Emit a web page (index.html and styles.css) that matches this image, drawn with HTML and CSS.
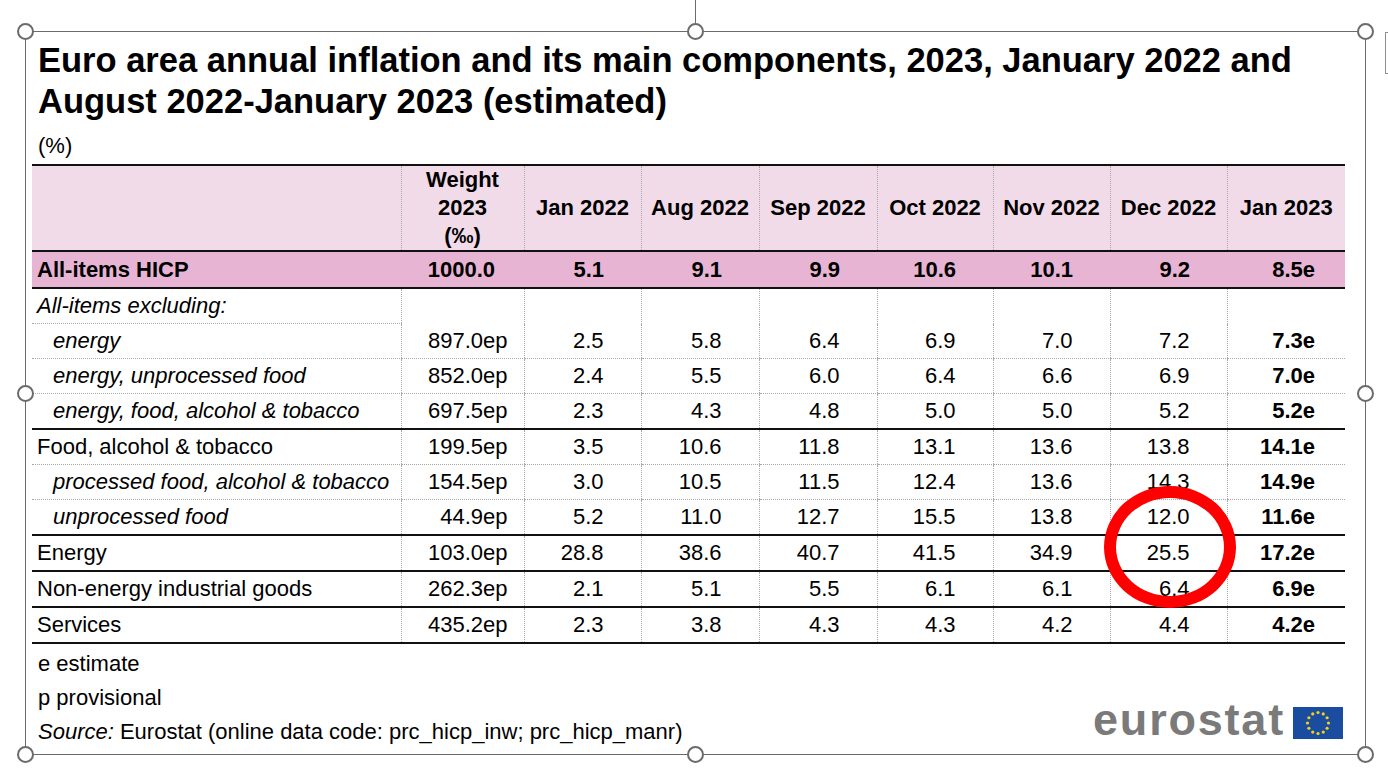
FILE: index.html
```html
<!DOCTYPE html>
<html lang="en">
<head>
<meta charset="utf-8">
<title>Euro area annual inflation</title>
<link rel="stylesheet" href="styles.css">
</head>
<body>
<div class="page">
  <div class="frame">
    <h1 class="title">Euro area annual inflation and its main components, 2023, January 2022 and August 2022-January 2023 (estimated)</h1>
    <div class="unit">(%)</div>
    <table class="data">
      <colgroup>
        <col class="c-label"><col class="c-weight"><col class="c-m117"><col class="c-m118"><col class="c-m118"><col class="c-m116"><col class="c-m117"><col class="c-m117"><col class="c-m118">
      </colgroup>
      <thead>
        <tr>
          <th></th>
          <th>Weight<br>2023<br>(‰)</th>
          <th>Jan 2022</th>
          <th>Aug 2022</th>
          <th>Sep 2022</th>
          <th>Oct 2022</th>
          <th>Nov 2022</th>
          <th>Dec 2022</th>
          <th>Jan 2023</th>
        </tr>
      </thead>
      <tbody>
        <tr class="hicp">
          <td class="label">All-items HICP</td><td class="w">1000.0</td><td>5.1</td><td>9.1</td><td>9.9</td><td>10.6</td><td>10.1</td><td>9.2</td><td class="last">8.5e</td>
        </tr>
        <tr class="first">
          <td class="label it">All-items excluding:</td><td class="w"></td><td></td><td></td><td></td><td></td><td></td><td></td><td class="last"></td>
        </tr>
        <tr class="dot">
          <td class="label sub">energy</td><td class="w">897.0ep</td><td>2.5</td><td>5.8</td><td>6.4</td><td>6.9</td><td>7.0</td><td>7.2</td><td class="last">7.3e</td>
        </tr>
        <tr class="dot">
          <td class="label sub">energy, unprocessed food</td><td class="w">852.0ep</td><td>2.4</td><td>5.5</td><td>6.0</td><td>6.4</td><td>6.6</td><td>6.9</td><td class="last">7.0e</td>
        </tr>
        <tr class="solid">
          <td class="label sub">energy, food, alcohol &amp; tobacco</td><td class="w">697.5ep</td><td>2.3</td><td>4.3</td><td>4.8</td><td>5.0</td><td>5.0</td><td>5.2</td><td class="last">5.2e</td>
        </tr>
        <tr class="dot">
          <td class="label">Food, alcohol &amp; tobacco</td><td class="w">199.5ep</td><td>3.5</td><td>10.6</td><td>11.8</td><td>13.1</td><td>13.6</td><td>13.8</td><td class="last">14.1e</td>
        </tr>
        <tr class="dot">
          <td class="label sub">processed food, alcohol &amp; tobacco</td><td class="w">154.5ep</td><td>3.0</td><td>10.5</td><td>11.5</td><td>12.4</td><td>13.6</td><td>14.3</td><td class="last">14.9e</td>
        </tr>
        <tr class="solid">
          <td class="label sub">unprocessed food</td><td class="w">44.9ep</td><td>5.2</td><td>11.0</td><td>12.7</td><td>15.5</td><td>13.8</td><td>12.0</td><td class="last">11.6e</td>
        </tr>
        <tr class="solid">
          <td class="label">Energy</td><td class="w">103.0ep</td><td>28.8</td><td>38.6</td><td>40.7</td><td>41.5</td><td>34.9</td><td>25.5</td><td class="last">17.2e</td>
        </tr>
        <tr class="solid">
          <td class="label">Non-energy industrial goods</td><td class="w">262.3ep</td><td>2.1</td><td>5.1</td><td>5.5</td><td>6.1</td><td>6.1</td><td>6.4</td><td class="last">6.9e</td>
        </tr>
        <tr class="solid">
          <td class="label">Services</td><td class="w">435.2ep</td><td>2.3</td><td>3.8</td><td>4.3</td><td>4.3</td><td>4.2</td><td>4.4</td><td class="last">4.2e</td>
        </tr>
      </tbody>
    </table>
    <div class="footer">
      <div class="notes">
        <p>e estimate</p>
        <p>p provisional</p>
        <p><em>Source:</em> Eurostat (online data code: prc_hicp_inw; prc_hicp_manr)</p>
      </div>
      <div class="logo">
        <span class="logo-text">eurostat</span>
        <svg class="flag" width="50" height="32" viewBox="0 0 50 32" aria-hidden="true">
          <rect x="0" y="0" width="50" height="32" fill="#1a4c9f"/>
          <g fill="#f2d21b">
            <circle cx="25" cy="5.5" r="1.6"/>
            <circle cx="30.25" cy="6.9" r="1.6"/>
            <circle cx="34.1" cy="10.75" r="1.6"/>
            <circle cx="35.5" cy="16" r="1.6"/>
            <circle cx="34.1" cy="21.25" r="1.6"/>
            <circle cx="30.25" cy="25.1" r="1.6"/>
            <circle cx="25" cy="26.5" r="1.6"/>
            <circle cx="19.75" cy="25.1" r="1.6"/>
            <circle cx="15.9" cy="21.25" r="1.6"/>
            <circle cx="14.5" cy="16" r="1.6"/>
            <circle cx="15.9" cy="10.75" r="1.6"/>
            <circle cx="19.75" cy="6.9" r="1.6"/>
          </g>
        </svg>
      </div>
    </div>
  </div>

  <div class="rot-line"></div>
  <div class="handle h-tl"></div>
  <div class="handle h-tm"></div>
  <div class="handle h-tr"></div>
  <div class="handle h-ml"></div>
  <div class="handle h-mr"></div>
  <div class="handle h-bl"></div>
  <div class="handle h-bm"></div>
  <div class="handle h-br"></div>
  <div class="side-btn"></div>
  <div class="ring"></div>
</div>
</body>
</html>
```
FILE: styles.css
```css
html, body {
  margin: 0;
  padding: 0;
  background: #ffffff;
}

body {
  font-family: "Liberation Sans", Arial, sans-serif;
  color: #000;
}

.page {
  position: relative;
  width: 1388px;
  height: 784px;
  overflow: hidden;
  box-sizing: border-box;
  padding: 31px 0 0 25px;
}

.frame {
  width: 1341px;
  height: 724px;
  box-sizing: border-box;
  border: 1px solid #6b6b6b;
  padding: 8px 0 0 6px;
}

.title {
  margin: 0;
  padding-left: 6px;
  width: 1307px;
  font-size: 34.5px;
  line-height: 41px;
  font-weight: bold;
}

.unit {
  margin-top: 11px;
  padding-left: 6px;
  font-size: 22px;
  line-height: 26px;
}

.data {
  margin-top: 5px;
  width: 1313px;
  table-layout: fixed;
  border-collapse: collapse;
  font-size: 22px;
}

.c-label { width: 369px; }
.c-weight { width: 123px; }
.c-m116 { width: 116px; }
.c-m117 { width: 117px; }
.c-m118 { width: 118px; }

.data th,
.data td {
  padding: 0;
}

.data thead th {
  height: 81px;
  line-height: 28px;
  background: #f2dbe9;
  font-weight: bold;
  text-align: center;
  vertical-align: middle;
  border-top: 2px solid #111;
  border-bottom: 2px solid #111;
  border-left: 1px dotted #a9a9a9;
}

.data thead th:first-child {
  border-left: none;
}

.data tbody td {
  height: 34px;
  line-height: 24px;
  text-align: right;
  vertical-align: middle;
  padding-right: 37px;
  border-left: 1px dotted #a9a9a9;
  white-space: nowrap;
}

.data tbody td.label {
  text-align: left;
  padding-left: 5px;
  padding-right: 0;
  border-left: none;
}

.data tbody td.sub {
  padding-left: 21px;
  font-style: italic;
}

.data tbody td.it {
  font-style: italic;
}

.data tbody td.w {
  padding-right: 16px;
}

.data tbody td.last {
  padding-right: 30px;
  font-weight: bold;
}

.data tbody tr.hicp td {
  height: 35px;
  background: #e8b4d4;
  font-weight: bold;
  border-left: none;
  border-bottom: 2px solid #111;
}

.data tbody tr.hicp td.w {
  padding-right: 29px;
}

.data tbody tr.first td.label {
  border-bottom: 1px dotted #a9a9a9;
}

.data tbody tr.dot td {
  border-bottom: 1px dotted #a9a9a9;
}

.data tbody tr.solid td {
  border-bottom: 2px solid #111;
}

.footer {
  width: 1313px;
  display: flex;
  justify-content: space-between;
}

.notes {
  margin-top: 3px;
  padding-left: 6px;
  font-size: 22px;
  line-height: 34px;
}

.notes p {
  margin: 0;
}

.logo {
  align-self: flex-end;
  display: flex;
  align-items: flex-end;
  gap: 8px;
  margin: 0 2px 10px 0;
}

.logo-text {
  font-size: 45px;
  line-height: 40px;
  font-weight: bold;
  letter-spacing: 1.8px;
  color: #7a7a7a;
  margin-bottom: -1px;
}

.flag {
  display: block;
}

/* selection overlay */
.rot-line {
  position: absolute;
  left: 695px;
  top: 0;
  width: 1px;
  height: 24px;
  background: #6b6b6b;
}

.handle {
  position: absolute;
  width: 17px;
  height: 17px;
  box-sizing: border-box;
  border: 2.5px solid #6b6b6b;
  border-radius: 50%;
  background: #fff;
  margin: -8px 0 0 -8px;
}

.h-tl { left: 25px; top: 31px; }
.h-tm { left: 695px; top: 31px; }
.h-tr { left: 1365px; top: 31px; }
.h-ml { left: 25px; top: 393px; }
.h-mr { left: 1365px; top: 393px; }
.h-bl { left: 25px; top: 754px; }
.h-bm { left: 695px; top: 754px; }
.h-br { left: 1365px; top: 754px; }

.side-btn {
  position: absolute;
  left: 1385px;
  top: 32px;
  width: 20px;
  height: 40px;
  border: 1px solid #8f8f8f;
  background: #fff;
}

.ring {
  position: absolute;
  left: 1104px;
  top: 486px;
  width: 132px;
  height: 122px;
  box-sizing: border-box;
  border: 12px solid #ff0000;
  border-radius: 50%;
}
```
